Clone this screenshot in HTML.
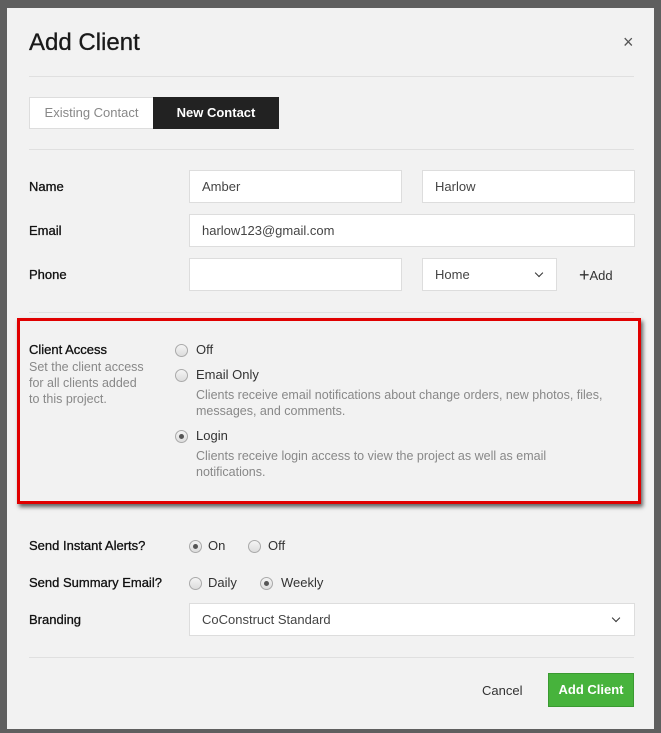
<!DOCTYPE html><html><head><style>
*{box-sizing:border-box;margin:0;padding:0}
body{width:661px;height:733px;background:#5f5f5f;font-family:"Liberation Sans",Arial,sans-serif;position:relative;overflow:hidden;color:#222}
.m{position:absolute;left:7px;top:8px;width:647px;height:721px;background:#f2f2f2}
.a{position:absolute}
.lbl{font-size:13px;color:#111;-webkit-text-stroke:0.3px #111}
.in{position:absolute;background:#fff;border:1px solid #ddd;font-size:13px;color:#444;padding-left:12px;line-height:31px;height:33px}
.hr{position:absolute;left:29px;width:605px;height:1px;background:#e0e0e0}
.r{position:absolute;width:13px;height:13px;border-radius:50%;border:1px solid #aaa;background:linear-gradient(#f4f4f4,#ddd)}
.r.on::after{content:"";position:absolute;left:3px;top:3px;width:5px;height:5px;border-radius:50%;background:#555}
.t{font-size:13px;color:#333}
.g{font-size:12.5px;color:#888;line-height:16px}
.chev{position:absolute;width:6px;height:6px;border-right:1.5px solid #333;border-bottom:1.5px solid #333;transform:rotate(45deg)}
</style></head><body>
<div class="m"></div>
<div class="a" style="left:29px;top:29px;font-size:24px;color:#1a1a1a;-webkit-text-stroke:0.3px #1a1a1a">Add Client</div>
<div class="a" style="left:623px;top:32px;font-size:18px;color:#555">×</div>
<div class="hr" style="top:76px"></div>
<div class="a" style="left:29px;top:97px;width:125px;height:32px;background:#fff;border:1px solid #ddd;font-size:13px;color:#888;text-align:center;line-height:30px">Existing Contact</div>
<div class="a" style="left:153px;top:97px;width:126px;height:32px;background:#222;color:#fff;font-size:13px;font-weight:bold;text-align:center;line-height:32px">New Contact</div>
<div class="hr" style="top:149px"></div>
<div class="a lbl" style="left:29px;top:179px">Name</div>
<div class="in" style="left:189px;top:170px;width:213px">Amber</div>
<div class="in" style="left:422px;top:170px;width:213px">Harlow</div>
<div class="a lbl" style="left:29px;top:223px">Email</div>
<div class="in" style="left:189px;top:214px;width:446px">harlow123@gmail.com</div>
<div class="a lbl" style="left:29px;top:267px">Phone</div>
<div class="in" style="left:189px;top:258px;width:213px"></div>
<div class="in" style="left:422px;top:258px;width:135px">Home</div>
<div class="chev" style="left:536px;top:270px"></div>
<div class="a" style="left:579px;top:267px;font-size:13px;color:#333"><span style="font-size:18px;line-height:14px;position:relative;top:1px">+</span>Add</div>
<div class="hr" style="top:312px"></div>
<div class="a" style="left:17px;top:318px;width:624px;height:186px;border:3px solid #e00000;box-shadow:2px 3px 4px rgba(0,0,0,.6)"></div>
<div class="a lbl" style="left:29px;top:342px">Client Access</div>
<div class="a g" style="left:29px;top:359px;width:118px">Set the client access for all clients added to this project.</div>
<div class="r" style="left:175px;top:344px"></div><div class="a t" style="left:196px;top:342px">Off</div>
<div class="r" style="left:175px;top:369px"></div><div class="a t" style="left:196px;top:367px">Email Only</div>
<div class="a g" style="left:196px;top:387px;width:440px">Clients receive email notifications about change orders, new photos, files, messages, and comments.</div>
<div class="r on" style="left:175px;top:430px"></div><div class="a t" style="left:196px;top:428px">Login</div>
<div class="a g" style="left:196px;top:448px;width:400px">Clients receive login access to view the project as well as email notifications.</div>
<div class="a lbl" style="left:29px;top:538px">Send Instant Alerts?</div>
<div class="r on" style="left:189px;top:540px"></div><div class="a t" style="left:208px;top:538px">On</div>
<div class="r" style="left:248px;top:540px"></div><div class="a t" style="left:268px;top:538px">Off</div>
<div class="a lbl" style="left:29px;top:575px">Send Summary Email?</div>
<div class="r" style="left:189px;top:577px"></div><div class="a t" style="left:208px;top:575px">Daily</div>
<div class="r on" style="left:260px;top:577px"></div><div class="a t" style="left:281px;top:575px">Weekly</div>
<div class="a lbl" style="left:29px;top:612px">Branding</div>
<div class="in" style="left:189px;top:603px;width:446px">CoConstruct Standard</div>
<div class="chev" style="left:613px;top:615px"></div>
<div class="hr" style="top:657px"></div>
<div class="a t" style="left:482px;top:683px">Cancel</div>
<div class="a" style="left:548px;top:673px;width:86px;height:34px;background:#47b33c;border:1px solid #3a9a31;color:#fff;font-size:13px;font-weight:bold;text-align:center;line-height:32px">Add Client</div>
</body></html>
